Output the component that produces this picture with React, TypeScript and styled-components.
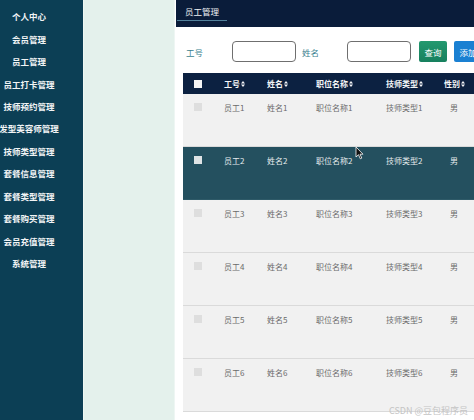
import React from 'react';
import styled, { createGlobalStyle } from 'styled-components';

const GlobalStyle = createGlobalStyle`
  html, body {
    margin: 0;
    padding: 0;
    background: #fff;
  }
  body {
    font-family: "Noto Sans CJK SC", "Noto Sans", sans-serif;
  }
`;

const menuItems = [
  '个人中心',
  '会员管理',
  '员工管理',
  '员工打卡管理',
  '技师预约管理',
  '发型美容师管理',
  '技师类型管理',
  '套餐信息管理',
  '套餐类型管理',
  '套餐购买管理',
  '会员充值管理',
  '系统管理',
];

const columns = '41px 43px 49px 70px 58px 40px 60px';

const rows = [1, 2, 3, 4, 5, 6].map((n) => ({
  id: n,
  code: `员工${n}`,
  name: `姓名${n}`,
  title: `职位名称${n}`,
  type: `技师类型${n}`,
  sex: '男',
}));

const Page = styled.div`
  display: flex;
  width: 474px;
  height: 420px;
  overflow: hidden;
  position: relative;
`;

const Sidebar = styled.nav`
  width: 83px;
  flex-shrink: 0;
  background: #0c3f55;
  overflow: hidden;
  padding-top: 5px;
  box-sizing: border-box;
`;

const MenuItem = styled.div`
  width: 58px;
  height: 22.45px;
  display: flex;
  align-items: center;
  justify-content: center;
  white-space: nowrap;
  color: #f2f4f5;
  font-size: 8.5px;
  font-weight: bold;
`;

const SidePanel = styled.div`
  width: 92px;
  flex-shrink: 0;
  background: #e4f1ec;
  border-left: 1px solid #eef7f3;
  border-right: 1px solid #eef6f3;
  box-sizing: border-box;
`;

const Main = styled.main`
  flex: 1;
  min-width: 0;
  background: #fff;
  padding-left: 1px;
  overflow: hidden;
`;

const TopBar = styled.div`
  height: 27px;
  background: #0a1c3a;
  padding-left: 1px;
`;

const Tab = styled.div`
  width: 50px;
  height: 21px;
  box-sizing: border-box;
  border-bottom: 1px solid #52819b;
  color: #f0f2f5;
  font-size: 8.5px;
  text-align: center;
  line-height: 22px;
`;

const FilterBar = styled.div`
  display: flex;
  align-items: center;
  height: 21px;
  margin-top: 14px;
  padding-left: 10px;
`;

const Label = styled.span<{ $w: number }>`
  width: ${({ $w }) => $w}px;
  flex-shrink: 0;
  color: #3a7f8f;
  font-size: 8.5px;
`;

const Input = styled.div`
  width: 64px;
  height: 21px;
  flex-shrink: 0;
  box-sizing: border-box;
  border: 1px solid #6f6f6f;
  border-radius: 4px;
  background: #fff;
  margin-right: 6px;
`;

const Button = styled.div<{ $color: string }>`
  height: 21px;
  width: 28px;
  flex-shrink: 0;
  border-radius: 2px;
  background: ${({ $color }) => $color};
  color: #fff;
  font-size: 8.5px;
  display: flex;
  align-items: center;
  justify-content: center;
  margin-left: 2px;
  margin-right: 5px;
`;

const Table = styled.div`
  margin: 11px 0 0 7px;
  width: 400px;
`;

const HeadRow = styled.div`
  display: grid;
  grid-template-columns: ${columns};
  height: 21px;
  align-items: center;
  background: #0c2141;
  color: #f4f6f8;
  font-size: 8px;
  font-weight: bold;
`;

const Row = styled.div<{ $active?: boolean }>`
  display: grid;
  grid-template-columns: ${columns};
  height: 53px;
  box-sizing: border-box;
  padding-top: 9px;
  align-items: start;
  background: ${({ $active }) => ($active ? '#24505f' : '#f1f1f1')};
  color: ${({ $active }) => ($active ? '#e6ecee' : '#6a6a6a')};
  border-bottom: 1px solid ${({ $active }) => ($active ? '#2e5a68' : '#dadada')};
  font-size: 8px;
  line-height: 9px;
`;

const Cell = styled.div<{ $pad?: number }>`
  padding-left: ${({ $pad }) => $pad ?? 0}px;
  white-space: nowrap;
  display: flex;
  align-items: center;
`;

const Check = styled.span<{ $tone: string }>`
  display: inline-block;
  width: 8px;
  height: 8px;
  background: ${({ $tone }) => $tone};
  margin-left: 11px;
`;

const Sort = () => (
  <svg width="4" height="6" viewBox="0 0 4 6" style={{ marginLeft: 1 }}>
    <path d="M2 0 L4 2.5 L0 2.5 Z M0 3.5 L4 3.5 L2 6 Z" fill="#f4f6f8" />
  </svg>
);

const Watermark = styled.div`
  position: absolute;
  right: 6px;
  bottom: 3px;
  color: #c4c4c4;
  font-size: 9px;
`;

const Pointer = styled.svg`
  position: absolute;
  left: 355px;
  top: 146px;
`;

const headers = ['工号', '姓名', '职位名称', '技师类型', '性别'];

const App: React.FC = () => {
  return (
    <Page>
      <GlobalStyle />
      <Sidebar>
        {menuItems.map((item) => (
          <MenuItem key={item}>{item}</MenuItem>
        ))}
      </Sidebar>
      <SidePanel />
      <Main>
        <TopBar>
          <Tab>员工管理</Tab>
        </TopBar>
        <FilterBar>
          <Label $w={46}>工号</Label>
          <Input />
          <Label $w={45}>姓名</Label>
          <Input />
          <Button $color="linear-gradient(#23996f, #17805e)">查询</Button>
          <Button $color="#1a80d2">添加</Button>
        </FilterBar>
        <Table>
          <HeadRow>
            <Cell>
              <Check $tone="#f4f4f4" />
            </Cell>
            {headers.map((h) => (
              <Cell key={h}>
                {h}
                <Sort />
              </Cell>
            ))}
            <Cell />
          </HeadRow>
          {rows.map((r) => (
            <Row key={r.id} $active={r.id === 2}>
              <Cell>
                <Check $tone={r.id === 2 ? '#dfe3e5' : '#dedede'} />
              </Cell>
              <Cell>{r.code}</Cell>
              <Cell $pad={-1}>{r.name}</Cell>
              <Cell>{r.title}</Cell>
              <Cell>{r.type}</Cell>
              <Cell $pad={6}>{r.sex}</Cell>
              <Cell />
            </Row>
          ))}
        </Table>
      </Main>
      <Watermark>CSDN @豆包程序员</Watermark>
      <Pointer width="9" height="14" viewBox="0 0 9 14">
        <path d="M1 1 L1 11 L3.5 8.7 L5.3 12.8 L6.8 12.1 L5 8.2 L8 8.2 Z" fill="#111" stroke="#fff" strokeWidth="0.8" />
      </Pointer>
    </Page>
  );
};

export default App;
